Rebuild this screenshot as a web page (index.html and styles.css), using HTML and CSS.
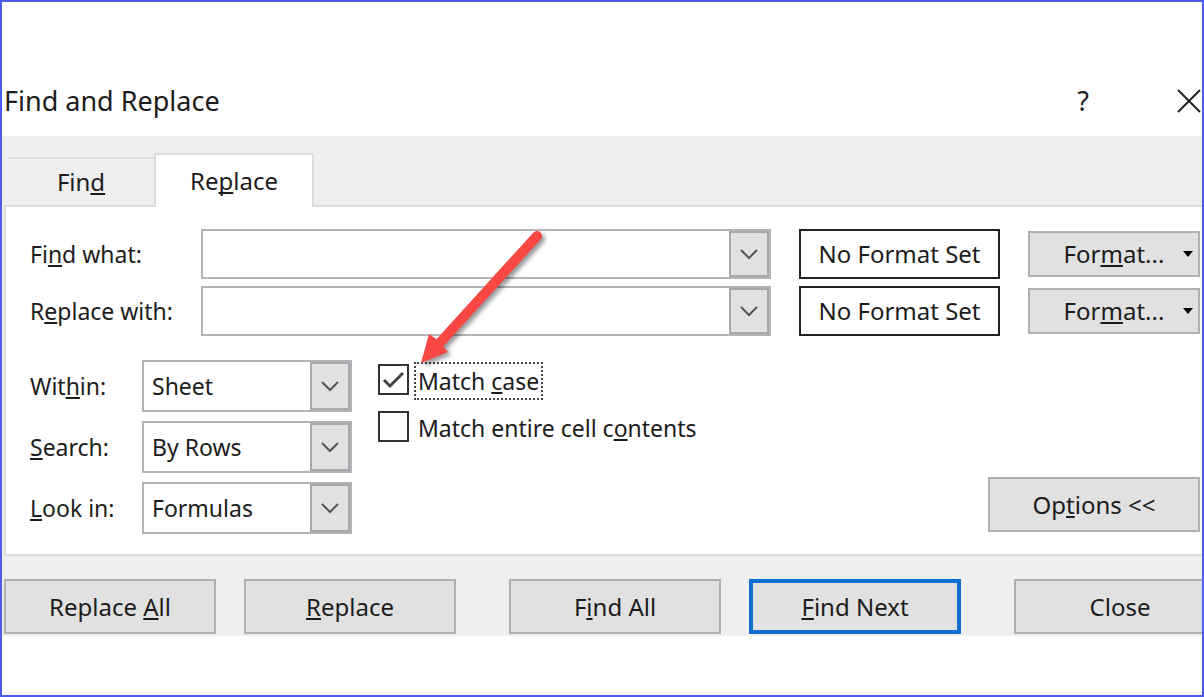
FILE: index.html
```
<!DOCTYPE html>
<html lang="en">
<head>
    <meta charset="UTF-8">
    <meta name="viewport" content="width=device-width, initial-scale=1.0">
    <title>Find and Replace</title>
    <link rel="stylesheet" href="styles.css">
</head>
<body>
    <div class="box">
        <div class="title">
            <h1>Find and Replace</h1>
            <button class="icon help" type="button">?</button>
            <button class="icon" type="button" aria-label="Close window">
                <svg width="24" height="24" viewBox="0 0 24 24"><path d="M1 1L23 23M23 1L1 23"/></svg>
            </button>
        </div>
        <form class="dialog">
            <div class="tabs">
                <button class="tab" type="button">Fin<u>d</u></button>
                <button class="tab active" type="button">Re<u>p</u>lace</button>
            </div>
            <div class="panel">
                <div class="fields">
                    <label for="find">Fi<u>n</u>d what:</label>
                    <div class="combo">
                        <input id="find" type="text">
                        <button class="drop" type="button" aria-label="Find history">
                            <svg width="20" height="12" viewBox="0 0 20 12"><path d="M2 2L10 10L18 2"/></svg>
                        </button>
                    </div>
                    <div class="preview">No Format Set</div>
                    <button class="btn format" type="button">For<u>m</u>at...</button>

                    <label for="replace">R<u>e</u>place with:</label>
                    <div class="combo">
                        <input id="replace" type="text">
                        <button class="drop" type="button" aria-label="Replace history">
                            <svg width="20" height="12" viewBox="0 0 20 12"><path d="M2 2L10 10L18 2"/></svg>
                        </button>
                    </div>
                    <div class="preview">No Format Set</div>
                    <button class="btn format" type="button">For<u>m</u>at...</button>
                </div>
                <div class="options">
                    <div class="selects">
                        <label for="within">Wit<u>h</u>in:</label>
                        <div class="combo">
                            <select id="within"><option>Sheet</option><option>Workbook</option></select>
                            <span class="drop"><svg width="20" height="12" viewBox="0 0 20 12"><path d="M2 2L10 10L18 2"/></svg></span>
                        </div>
                        <label for="search"><u>S</u>earch:</label>
                        <div class="combo">
                            <select id="search"><option>By Rows</option><option>By Columns</option></select>
                            <span class="drop"><svg width="20" height="12" viewBox="0 0 20 12"><path d="M2 2L10 10L18 2"/></svg></span>
                        </div>
                        <label for="look"><u>L</u>ook in:</label>
                        <div class="combo">
                            <select id="look"><option>Formulas</option></select>
                            <span class="drop"><svg width="20" height="12" viewBox="0 0 20 12"><path d="M2 2L10 10L18 2"/></svg></span>
                        </div>
                    </div>
                    <div class="checks">
                        <div class="check">
                            <input id="case" type="checkbox" checked>
                            <label class="focus" for="case">Match <u>c</u>ase</label>
                        </div>
                        <div class="check">
                            <input id="entire" type="checkbox">
                            <label for="entire">Match entire cell c<u>o</u>ntents</label>
                        </div>
                    </div>
                    <button class="btn toggle" type="button">Op<u>t</u>ions &lt;&lt;</button>
                </div>
                <!-- arrow pointing at Match case -->
                <svg class="arrow" width="140" height="150" viewBox="0 0 140 150">
                    <path class="line" d="M126 17L26 127"/>
                    <path class="head" d="M10 144L18 115L25 120L32 127L37 133Z"/>
                </svg>
            </div>
            <div class="footer">
                <div class="group">
                    <button class="btn" type="button">Replace <u>A</u>ll</button>
                    <button class="btn" type="button"><u>R</u>eplace</button>
                </div>
                <div class="group">
                    <button class="btn" type="button">F<u>i</u>nd All</button>
                    <button class="btn default" type="button"><u>F</u>ind Next</button>
                </div>
                <button class="btn" type="button">Close</button>
            </div>
        </form>
    </div>
</body>
</html>
```
FILE: styles.css
```
*{
    margin: 0;
    padding: 0;
    box-sizing: border-box;
}
body{
    font: 24px/32px "Noto Sans", "Open Sans", sans-serif;
    color: #1c1c1c;
    background: white;
}
button, input, select{
    font: inherit;
    color: inherit;
}
label, select{
    font-size: 23px;
    white-space: nowrap;
}
u{
    text-decoration-thickness: 2px;
    text-underline-offset: 2px;
    text-decoration-skip-ink: none;
}
svg{
    display: block;
    fill: none;
}
.box{
    min-height: 100vh;
    overflow: hidden;
    padding-top: 64px;
    border: 2px solid #4a5cee;
}

.title{
    display: flex;
    align-items: center;
    height: 70px;
    padding: 0 1px 0 2px;
}
.title h1{
    flex: 1;
    font-size: 27px;
    font-weight: normal;
}
.title .icon{
    border: none;
    background: none;
}
.title .help{
    margin-right: 88px;
    font-size: 27px;
}
.title svg{
    stroke: #222;
    stroke-width: 2;
}

.dialog{
    padding: 17px 0 2px 2px;
    background: #efefef;
}
.tabs{
    display: flex;
    align-items: flex-end;
    padding-left: 4px;
}
.tab{
    width: 146px;
    height: 48px;
    border: none;
    border-top: 2px solid #dcdcdc;
    background: #efefef;
}
.tab.active{
    position: relative;
    z-index: 1;
    width: 160px;
    height: 54px;
    margin-bottom: -2px;
    border: 2px solid #dcdcdc;
    border-bottom: none;
    background: white;
}
.panel{
    position: relative;
    padding: 22px 2px 20px 24px;
    border: 2px solid #dcdcdc;
    border-right: none;
    background: white;
}
.fields{
    display: grid;
    grid-template-columns: 143px 1fr 201px 172px;
    grid-auto-rows: 50px;
    gap: 7px 28px;
    align-items: center;
}
.combo{
    position: relative;
    display: flex;
    height: 100%;
    border: 2px solid #b4b4b8;
}
.combo input, .combo select{
    flex: 1;
    min-width: 0;
    padding-left: 8px;
    border: none;
    outline: none;
    background: white;
    appearance: none;
}
.drop{
    display: flex;
    align-items: center;
    justify-content: center;
    width: 40px;
    border: 2px solid #a8a8ac;
    background: #e1e1e1;
}
.combo select + .drop{
    position: absolute;
    top: 0;
    right: 0;
    bottom: 0;
    pointer-events: none;
}
.drop svg{
    stroke: #555;
    stroke-width: 2;
}
.preview{
    height: 50px;
    border: 2px solid #222;
    line-height: 46px;
    text-align: center;
}
.btn{
    flex: none;
    width: 212px;
    height: 55px;
    border: 2px solid #b0b0b0;
    background: #e1e1e1;
}
.btn.format{
    position: relative;
    width: 172px;
    height: 46px;
}
.btn.format:after{
    content: "";
    position: absolute;
    right: 5px;
    top: 18px;
    border: 5px solid transparent;
    border-top: 6px solid black;
    border-bottom: none;
}

.options{
    display: flex;
    margin-top: 24px;
}
.selects{
    display: grid;
    grid-template-columns: 112px 210px;
    grid-auto-rows: 52px;
    row-gap: 9px;
    align-items: center;
}
.checks{
    flex: 1;
    padding: 2px 0 0 26px;
}
.check{
    display: flex;
    align-items: flex-start;
    height: 38px;
    margin-bottom: 9px;
}
.check input{
    width: 31px;
    height: 31px;
    margin: 2px 5px 0 0;
    border: 2px solid #333;
    background: white;
    appearance: none;
}
.check input:checked{
    background: url("data:image/svg+xml,%3Csvg xmlns='http://www.w3.org/2000/svg' viewBox='0 0 27 27'%3E%3Cpath d='M4 14L10 20L23 7' fill='none' stroke='%23444' stroke-width='3'/%3E%3C/svg%3E") center no-repeat;
}
.check label{
    padding: 1px 2px;
    border: 2px solid transparent;
}
.check .focus{
    border: 2px dotted #444;
}
.toggle{
    align-self: flex-end;
    margin-bottom: 2px;
}
.arrow{
    position: absolute;
    left: 405px;
    top: 12px;
    pointer-events: none;
    filter: drop-shadow(3px 3px 2px rgba(0, 0, 0, 0.4));
}
.arrow .line{
    stroke: #f94744;
    stroke-width: 10;
    stroke-linecap: round;
}
.arrow .head{
    fill: #f94744;
}

.footer{
    display: flex;
    gap: 53px;
    margin-top: 23px;
}
.group{
    display: flex;
    gap: 28px;
}
.btn.default{
    border: 4px solid #0f6fd0;
}
```
